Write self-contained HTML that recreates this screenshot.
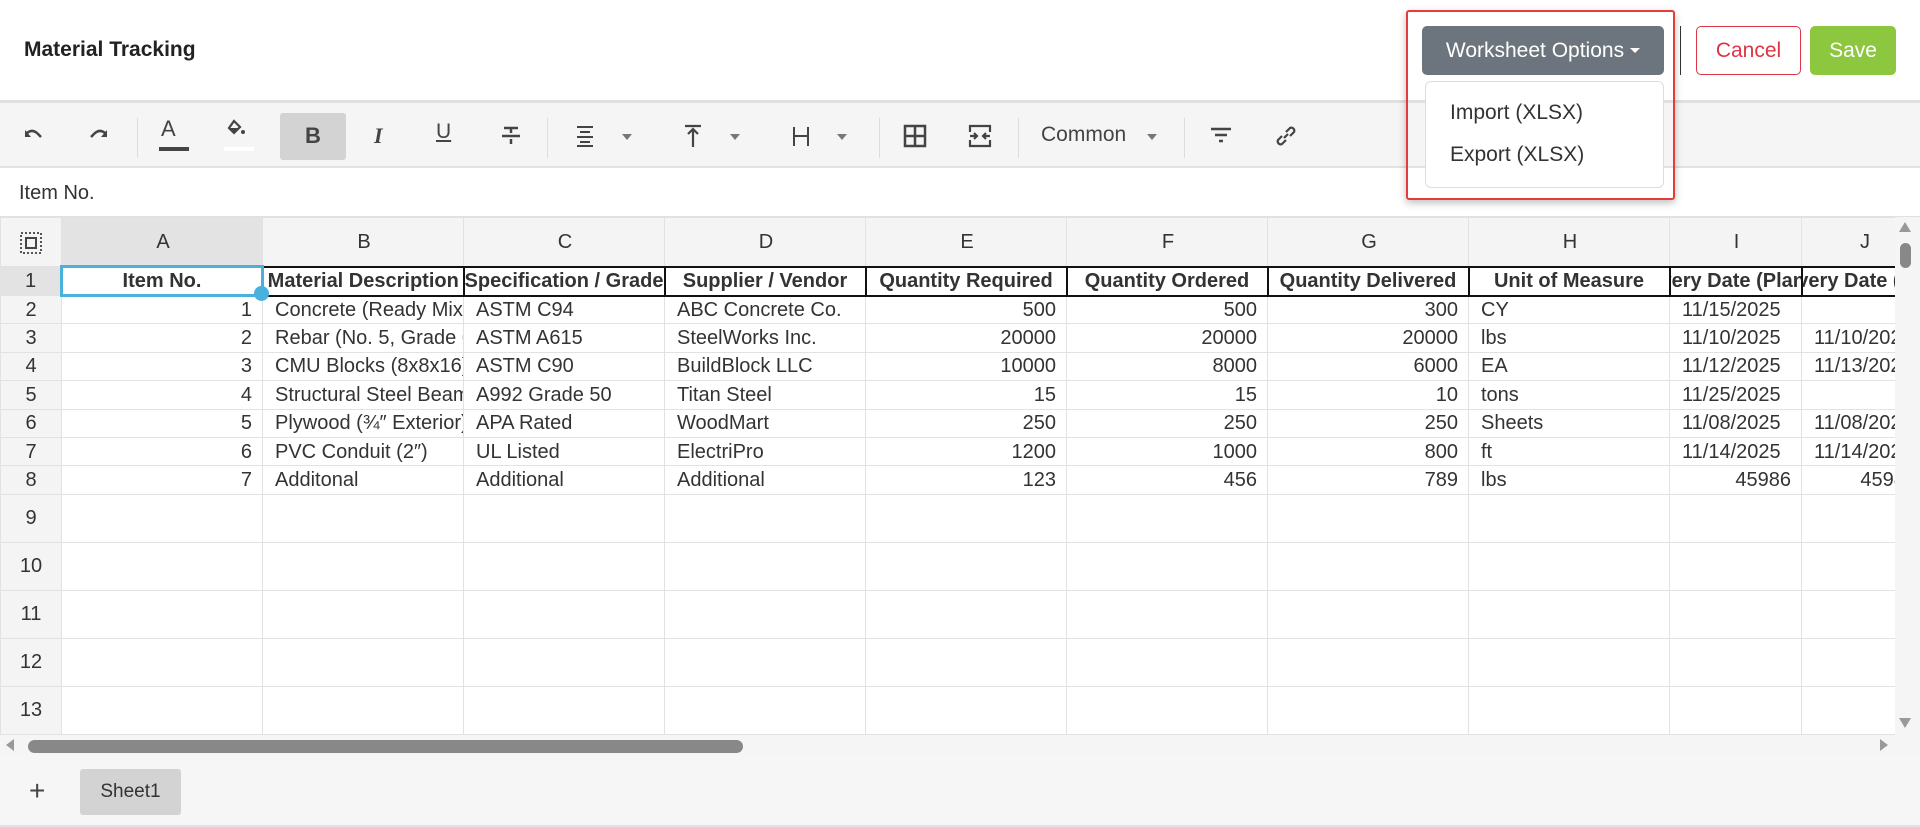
<!DOCTYPE html>
<html><head><meta charset="utf-8"><style>
*{box-sizing:border-box;margin:0;padding:0}
body{width:1920px;height:827px;overflow:hidden;background:#fff;font-family:"Liberation Sans",Arial,sans-serif;color:#333;position:relative}
.abs{position:absolute}
.title{left:24px;top:38px;font-size:21px;font-weight:bold;color:#222}
.btn{position:absolute;top:26px;height:49px;border-radius:5px;font-size:21px;display:flex;align-items:center;justify-content:center;z-index:10}
.toolbar{left:0;top:100px;width:1920px;height:68px;background:#f5f5f5;border-top:3px solid #e0e0e0;border-bottom:2px solid #e2e2e2}
.ic{position:absolute;top:20px;width:26px;height:26px}
.dv{position:absolute;top:15px;width:1px;height:40px;background:#ddd}
.arr{position:absolute;top:31px;width:0;height:0;border-left:5px solid transparent;border-right:5px solid transparent;border-top:6px solid #777}
.fbar{left:0;top:168px;width:1920px;height:49px;border-bottom:1px solid #e0e0e0;font-size:20px;color:#333;padding:14px 0 0 19px}
table{position:absolute;left:0;top:217px;border-collapse:collapse;table-layout:fixed;font-size:20px;color:#333}
.gridclip{position:absolute;left:0;top:217px;width:1895px;height:518px;overflow:hidden}
td{border:1px solid #e2e2e2;white-space:nowrap;overflow:hidden;padding:0 10px 0 12px;height:28.4px;line-height:26px}
td.rh{background:#f4f4f4;text-align:center;padding:0;color:#333}
tr.ch td{background:#f4f4f4;text-align:center;height:49px;color:#333}
tr.h1 td{font-weight:bold;color:#333;text-align:center;border:2px solid #111;padding:0;height:28px}
tr.h1 td div{display:flex;justify-content:center;white-space:nowrap;overflow:hidden}
tr.big td{height:48px}
.r{text-align:right}
</style></head><body>
<div class="abs title">Material Tracking</div>

<div class="abs toolbar">
<svg class="ic" style="left:20px" viewBox="0 0 26 26"><path d="M7 10 Q13 5 19 12 L21 14" fill="none" stroke="#444" stroke-width="2.5"/><path d="M5 7 L5 14 L11 14Z" fill="#444"/></svg>
<svg class="ic" style="left:86px" viewBox="0 0 26 26"><path d="M19 10 Q13 5 7 12 L5 14" fill="none" stroke="#444" stroke-width="2.5"/><path d="M21 7 L21 14 L15 14Z" fill="#444"/></svg>
<div class="dv" style="left:137px"></div>
<div class="abs" style="left:161px;top:13px;font-size:22px;color:#444">A</div>
<div class="abs" style="left:159px;top:44px;width:30px;height:4px;background:#444"></div>
<svg class="ic" style="left:226px;top:14px" viewBox="0 0 26 26"><path d="M8 4 L14 10 L8 16 L3 11Z" fill="none" stroke="#444" stroke-width="2.2"/><path d="M4 11 L14 11 L8 16Z" fill="#444"/><circle cx="17" cy="15" r="2" fill="#444"/></svg>
<div class="abs" style="left:224px;top:44px;width:30px;height:4px;background:#fff"></div>
<div class="abs" style="left:280px;top:10px;width:66px;height:47px;background:#d3d3d3;border-radius:3px"></div>
<div class="abs" style="left:305px;top:20px;font-size:22px;font-weight:bold;color:#444">B</div>
<div class="abs" style="left:374px;top:20px;font-size:22px;font-weight:bold;font-style:italic;font-family:'Liberation Serif',serif;color:#444">I</div>
<div class="abs" style="left:436px;top:17px;font-size:21px;color:#444;text-decoration:underline">U</div>
<svg class="ic" style="left:498px" viewBox="0 0 26 26"><path d="M6 5H20M13 5V10M4 13H22M13 16V21" stroke="#444" stroke-width="2.5"/></svg>
<div class="dv" style="left:547px"></div>
<svg class="ic" style="left:572px" viewBox="0 0 26 26"><path d="M5 4H21M8 9H18M5 14H21M8 19H18M5 23H21" stroke="#444" stroke-width="2"/></svg>
<div class="arr" style="left:622px"></div>
<svg class="ic" style="left:680px" viewBox="0 0 26 26"><path d="M5 3H21M13 6V24M8 11L13 6L18 11" fill="none" stroke="#444" stroke-width="2.2"/></svg>
<div class="arr" style="left:730px"></div>
<svg class="ic" style="left:788px" viewBox="0 0 26 26"><path d="M6 4V23M20 4V23M6 13H20" fill="none" stroke="#444" stroke-width="2"/></svg>
<div class="arr" style="left:837px"></div>
<div class="dv" style="left:879px"></div>
<svg class="ic" style="left:902px" viewBox="0 0 26 26"><rect x="3" y="3" width="20" height="20" fill="none" stroke="#444" stroke-width="2.5"/><path d="M13 3V23M3 13H23" stroke="#444" stroke-width="2.5"/></svg>
<svg class="ic" style="left:967px" viewBox="0 0 26 26"><path d="M3 9V3H23V9M3 17V23H23V17M3 13H10M16 13H23M7 10L10 13L7 16M19 10L16 13L19 16" fill="none" stroke="#444" stroke-width="2.2"/></svg>
<div class="dv" style="left:1018px"></div>
<div class="abs" style="left:1041px;top:20px;font-size:21px;color:#444">Common</div>
<div class="arr" style="left:1147px"></div>
<div class="dv" style="left:1184px"></div>
<svg class="ic" style="left:1208px" viewBox="0 0 26 26"><path d="M3 6H23M7 12H19M11 18H15" stroke="#444" stroke-width="2.5"/></svg>
<svg class="ic" style="left:1273px" viewBox="0 0 26 26"><path d="M11 15L15 11M9 13L5 17A3 3 0 0 0 9 21L13 17M17 13L21 9A3 3 0 0 0 17 5L13 9" fill="none" stroke="#444" stroke-width="2.2"/></svg>
</div>

<div class="abs fbar">Item No.</div>

<div class="gridclip"><table style="left:0;top:0;width:1926px">
<colgroup><col style="width:61px"><col style="width:201px"><col style="width:201px"><col style="width:201px"><col style="width:201px"><col style="width:201px"><col style="width:201px"><col style="width:201px"><col style="width:201px"><col style="width:132px"><col style="width:125px"></colgroup>
<tr class="ch"><td style="padding:0"><svg width="24" height="24" viewBox="0 0 24 24" style="vertical-align:middle"><rect x="2" y="2" width="20" height="20" fill="none" stroke="#555" stroke-width="2" stroke-dasharray="2 2"/><rect x="7" y="7" width="10" height="10" fill="none" stroke="#444" stroke-width="2"/></svg></td><td style="background:#e3e3e3">A</td><td>B</td><td>C</td><td>D</td><td>E</td><td>F</td><td>G</td><td>H</td><td>I</td><td>J</td></tr>
<tr class="h1"><td class="rh" style="background:#e3e3e3;border:1px solid #e2e2e2;font-weight:normal">1</td><td style="border:3px solid #4ab0dc"><div>Item No.</div></td><td><div>Material Description</div></td><td><div>Specification / Grade</div></td><td><div>Supplier / Vendor</div></td><td><div>Quantity Required</div></td><td><div>Quantity Ordered</div></td><td><div>Quantity Delivered</div></td><td><div>Unit of Measure</div></td><td><div>Delivery Date (Planned)</div></td><td><div>Delivery Date (Actual)</div></td></tr>
<tr><td class="rh">2</td><td class="r">1</td><td>Concrete (Ready Mix)</td><td>ASTM C94</td><td>ABC Concrete Co.</td><td class="r">500</td><td class="r">500</td><td class="r">300</td><td>CY</td><td>11/15/2025</td><td></td></tr>
<tr><td class="rh">3</td><td class="r">2</td><td>Rebar (No. 5, Grade 60)</td><td>ASTM A615</td><td>SteelWorks Inc.</td><td class="r">20000</td><td class="r">20000</td><td class="r">20000</td><td>lbs</td><td>11/10/2025</td><td>11/10/2025</td></tr>
<tr><td class="rh">4</td><td class="r">3</td><td>CMU Blocks (8x8x16)</td><td>ASTM C90</td><td>BuildBlock LLC</td><td class="r">10000</td><td class="r">8000</td><td class="r">6000</td><td>EA</td><td>11/12/2025</td><td>11/13/2025</td></tr>
<tr><td class="rh">5</td><td class="r">4</td><td>Structural Steel Beams</td><td>A992 Grade 50</td><td>Titan Steel</td><td class="r">15</td><td class="r">15</td><td class="r">10</td><td>tons</td><td>11/25/2025</td><td></td></tr>
<tr><td class="rh">6</td><td class="r">5</td><td>Plywood (¾″ Exterior)</td><td>APA Rated</td><td>WoodMart</td><td class="r">250</td><td class="r">250</td><td class="r">250</td><td>Sheets</td><td>11/08/2025</td><td>11/08/2025</td></tr>
<tr><td class="rh">7</td><td class="r">6</td><td>PVC Conduit (2″)</td><td>UL Listed</td><td>ElectriPro</td><td class="r">1200</td><td class="r">1000</td><td class="r">800</td><td>ft</td><td>11/14/2025</td><td>11/14/2025</td></tr>
<tr><td class="rh">8</td><td class="r">7</td><td>Additonal</td><td>Additional</td><td>Additional</td><td class="r">123</td><td class="r">456</td><td class="r">789</td><td>lbs</td><td class="r">45986</td><td class="r">45986</td></tr>
<tr class="big"><td class="rh">9</td><td></td><td></td><td></td><td></td><td></td><td></td><td></td><td></td><td></td><td></td></tr>
<tr class="big"><td class="rh">10</td><td></td><td></td><td></td><td></td><td></td><td></td><td></td><td></td><td></td><td></td></tr>
<tr class="big"><td class="rh">11</td><td></td><td></td><td></td><td></td><td></td><td></td><td></td><td></td><td></td><td></td></tr>
<tr class="big"><td class="rh">12</td><td></td><td></td><td></td><td></td><td></td><td></td><td></td><td></td><td></td><td></td></tr>
<tr class="big"><td class="rh">13</td><td></td><td></td><td></td><td></td><td></td><td></td><td></td><td></td><td></td><td></td></tr>
</table>
<div class="abs" style="left:254px;top:69px;width:15px;height:15px;border-radius:50%;background:#4ab0dc"></div>
</div>

<!-- header controls / dropdown on top -->
<div class="abs" style="left:1406px;top:10px;width:269px;height:190px;border:2px solid #e63b3b;border-radius:3px;box-shadow:0 3px 8px rgba(0,0,0,.25);background:transparent;z-index:9"></div>
<div class="btn" style="left:1422px;width:242px;background:#6c757d;color:#fff">Worksheet Options<span style="display:inline-block;margin-left:6px;border-left:5px solid transparent;border-right:5px solid transparent;border-top:5px solid #fff"></span></div>
<div class="abs" style="left:1425px;top:81px;width:239px;height:107px;border:1px solid #ddd;border-radius:6px;background:#fff;font-size:21px;color:#333;z-index:10">
<div style="position:absolute;left:24px;top:19px">Import (XLSX)</div>
<div style="position:absolute;left:24px;top:61px">Export (XLSX)</div></div>
<div class="abs" style="left:1680px;top:26px;width:1px;height:49px;background:#333"></div>
<div class="btn" style="left:1696px;width:105px;border:1px solid #dc3545;color:#dc3545;background:#fff">Cancel</div>
<div class="btn" style="left:1810px;width:86px;background:#8dc63f;color:#fff">Save</div>

<!-- vertical scrollbar -->
<div class="abs" style="left:1895px;top:217px;width:25px;height:518px;background:#f5f5f5"></div>
<div class="abs" style="left:1899px;top:222px;width:0;height:0;border-left:6px solid transparent;border-right:6px solid transparent;border-bottom:10px solid #999"></div>
<div class="abs" style="left:1900px;top:243px;width:11px;height:25px;border-radius:6px;background:#888"></div>
<div class="abs" style="left:1899px;top:718px;width:0;height:0;border-left:6px solid transparent;border-right:6px solid transparent;border-top:10px solid #999"></div>
<!-- horizontal scrollbar -->
<div class="abs" style="left:0;top:735px;width:1920px;height:20px;background:#f5f5f5"></div>
<div class="abs" style="left:6px;top:739px;width:0;height:0;border-top:6px solid transparent;border-bottom:6px solid transparent;border-right:8px solid #999"></div>
<div class="abs" style="left:28px;top:740px;width:715px;height:13px;border-radius:7px;background:#888"></div>
<div class="abs" style="left:1880px;top:739px;width:0;height:0;border-top:6px solid transparent;border-bottom:6px solid transparent;border-left:8px solid #999"></div>
<!-- footer -->
<div class="abs" style="left:0;top:755px;width:1920px;height:72px;background:#f6f6f6;border-bottom:2px solid #e2e2e2"></div>
<div class="abs" style="left:29px;top:775px;font-size:28px;color:#444;font-weight:300">+</div>
<div class="abs" style="left:80px;top:769px;width:101px;height:46px;background:#d3d3d3;border-radius:3px;font-size:19px;color:#333;display:flex;align-items:center;justify-content:center">Sheet1</div>
</body></html>
